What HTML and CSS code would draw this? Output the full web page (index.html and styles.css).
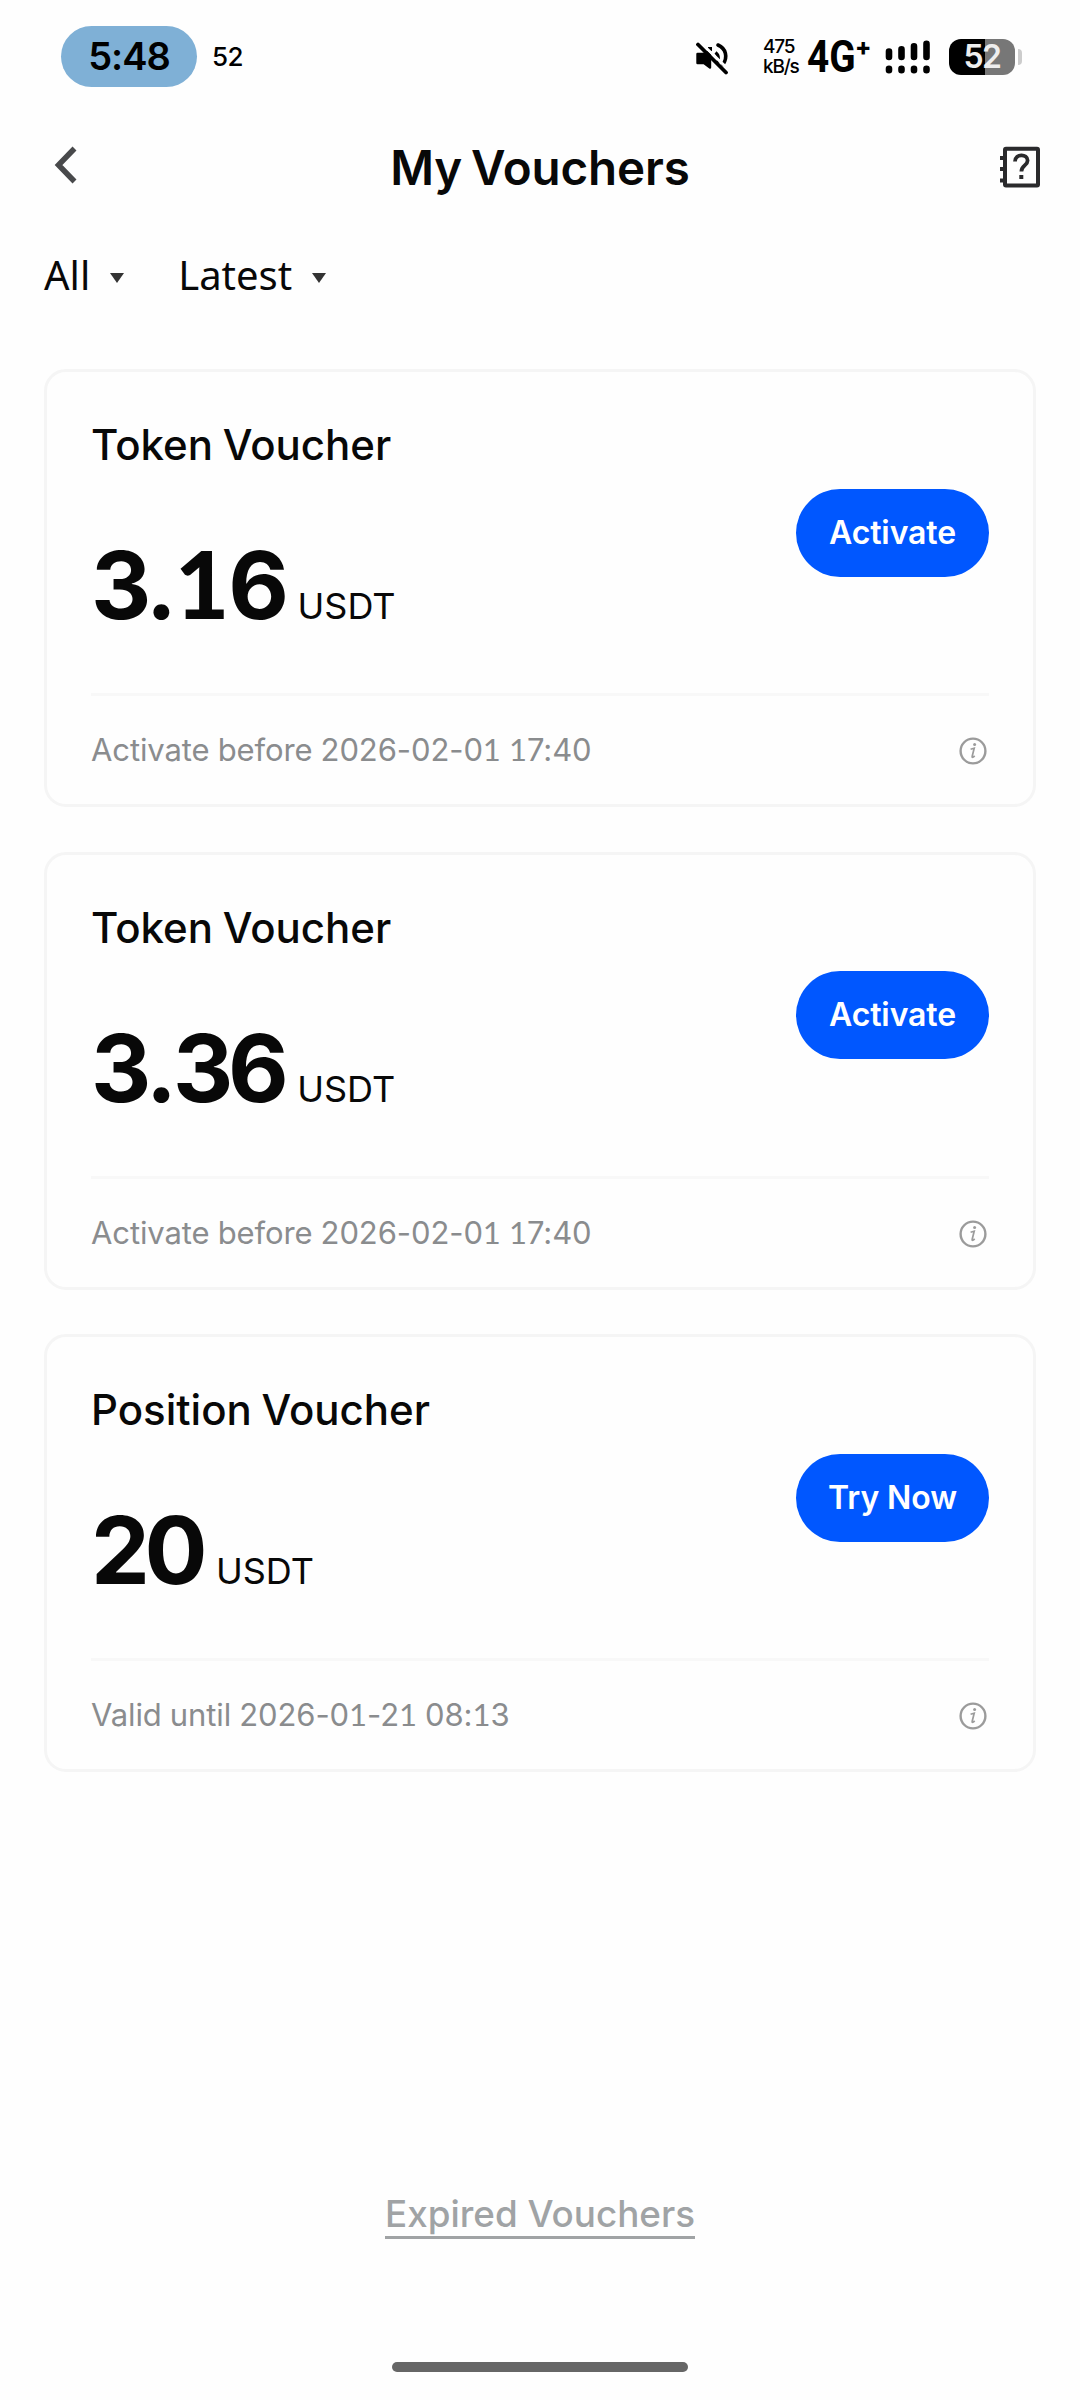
FILE: index.html
```html
<!DOCTYPE html>
<html lang="en">
<head>
<meta charset="utf-8">
<title>My Vouchers</title>
<link rel="stylesheet" href="styles.css">
</head>
<body>
<svg class="defs" width="0" height="0" aria-hidden="true">
  <symbol id="info" viewBox="0 0 28 28">
    <circle cx="14" cy="14" r="12.4" fill="none" stroke="#9b9b9b" stroke-width="2.4"/>
    <circle cx="15.600" cy="7.600" r="1.500" fill="#9b9b9b"/>
    <path d="M11.600 12.300L15.200 11.200L13.200 19.300C12.900 20.800 13.800 20.600 15.700 18.800" fill="none" stroke="#9b9b9b" stroke-width="1.700"/>
  </symbol>
</svg>
<div class="screen">
  <div class="status">
    <span class="clock">5:48</span>
    <span class="temp">52</span>
    <div class="indicators">
      <svg class="mute" width="34" height="36" viewBox="0 0 34 36">
        <path d="M2.500 15h5.500l7-3v16.500l-6-4.500h-6.500z" fill="#000" stroke="#000" stroke-width="2.400" stroke-linejoin="round"/>
        <path d="M15 8v4" stroke="#000" stroke-width="4"/>
        <path d="M20.500 13.500c3 2.500 3.500 6 2.500 10" fill="none" stroke="#000" stroke-width="3.200"/>
        <path d="M23 6c8 3.500 10 12 5 19.500" fill="none" stroke="#000" stroke-width="3.600" stroke-linecap="round"/>
        <path d="M6 4L34.500 31.500" stroke="#fefefe" stroke-width="3"/>
        <path d="M3 5.500L31 33.500" stroke="#000" stroke-width="3.800" stroke-linecap="round"/>
      </svg>
      <div class="speed"><span>475</span><span>kB/s</span></div>
      <span class="net">4G</span><span class="plus">+</span>
      <svg class="signal" width="46" height="36" viewBox="0 0 46 36" stroke="#000" stroke-width="6.600" stroke-linecap="round">
        <path d="M4 12.500v5.500M16.500 10.400v7.600M29 7.400v10.600M41.500 4.900v13.100"/>
        <path d="M4 29.800v1.400M16.500 29.800v1.400M29 29.800v1.400M41.500 29.800v1.400"/>
      </svg>
      <span class="battery">52</span><span class="nub"></span>
    </div>
  </div>

  <header class="header">
    <svg class="back" width="30" height="40" viewBox="0 0 30 40"><path d="M23.500 3.500L7.500 20L23.500 36.500" fill="none" stroke="#48494b" stroke-width="5.500"/></svg>
    <h1 class="title">My Vouchers</h1>
    <svg class="help" width="44" height="44" viewBox="0 0 44 44">
      <rect x="6" y="3.800" width="33" height="36.800" rx="1" fill="none" stroke="#2a2a2c" stroke-width="4"/>
      <path d="M1 13h5M1 24h5M1 35.500h5" stroke="#2a2a2c" stroke-width="4"/>
      <path d="M16 16.500c0-8 12.600-8 12.600-1c0 5-6.200 5-6.200 11" fill="none" stroke="#2a2a2c" stroke-width="3.800"/>
      <rect x="20.300" y="30" width="4" height="4" fill="#2a2a2c"/>
    </svg>
  </header>

  <nav class="filters">
    <span class="filter all">All</span><span class="caret"></span>
    <span class="filter latest">Latest</span><span class="caret"></span>
  </nav>

  <main class="list">
    <article class="card">
      <div class="main">
        <div class="info">
          <h2 class="name">Token Voucher</h2>
          <div class="amount"><span class="value">3<span class="point">.</span><span class="one">1</span>6</span><span class="unit">USDT</span></div>
        </div>
        <button class="action">Activate</button>
      </div>
      <div class="foot"><span class="date">Activate before 2026-02-0<span class="thin-one">1</span> <span class="thin-one">1</span>7:40</span><svg class="tip" width="28" height="28"><use href="#info"/></svg></div>
    </article>
    <article class="card">
      <div class="main">
        <div class="info">
          <h2 class="name">Token Voucher</h2>
          <div class="amount"><span class="value">3<span class="point">.</span>36</span><span class="unit">USDT</span></div>
        </div>
        <button class="action">Activate</button>
      </div>
      <div class="foot"><span class="date">Activate before 2026-02-0<span class="thin-one">1</span> <span class="thin-one">1</span>7:40</span><svg class="tip" width="28" height="28"><use href="#info"/></svg></div>
    </article>
    <article class="card">
      <div class="main">
        <div class="info">
          <h2 class="name">Position Voucher</h2>
          <div class="amount"><span class="value">20</span><span class="unit">USDT</span></div>
        </div>
        <button class="action">Try Now</button>
      </div>
      <div class="foot"><span class="date">Valid until 2026-0<span class="thin-one">1</span>-2<span class="thin-one">1</span> 08:<span class="thin-one">1</span>3</span><svg class="tip" width="28" height="28"><use href="#info"/></svg></div>
    </article>
  </main>

  <footer class="bottom">
    <a class="expired">Expired Vouchers</a>
    <div class="homebar"></div>
  </footer>
</div>
</body>
</html>
```
FILE: styles.css
```css
* { box-sizing: border-box; }
body { margin: 0; background: #fefefe; }
.defs { display: block; }
.screen {
  width: 1080px; height: 2400px; overflow: hidden;
  display: flex; flex-direction: column;
  font-family: Inter, "Liberation Sans", sans-serif;
  color: #080808; white-space: nowrap;
}

.status { height: 113px; padding: 0 58px 0 61px; display: flex; align-items: center; color: #000; }
.clock {
  width: 136px; height: 61px; border-radius: 31px; background: #7fb0d6;
  text-align: center; font-size: 38px; font-weight: 600; line-height: 60px; letter-spacing: -1px;
}
.temp { margin-left: 15px; font-size: 26px; font-weight: 500; line-height: 60px; letter-spacing: -0.5px; }
.indicators { margin-left: auto; height: 36px; display: flex; align-items: center; }
.mute { margin-right: 34px; }
.speed { width: 33px; display: flex; flex-direction: column; font-size: 19px; line-height: 19.500px; font-weight: 500; letter-spacing: -1.200px; }
.net { margin-left: 11px; width: 48px; font: 700 45px/40px "Roboto", sans-serif; transform: scaleX(0.86); transform-origin: left; }
.plus { align-self: flex-start; width: 20px; font-size: 24px; line-height: 16px; font-weight: 800; }
.signal { margin-left: 10px; }
.battery {
  margin-left: 18px; width: 66px; height: 36px; border-radius: 12px;
  background: linear-gradient(to right, #000 36px, #777 36px);
  color: #eee; text-align: center; font-size: 32px; font-weight: 600; line-height: 36px; letter-spacing: -1.500px;
}
.nub { margin-left: 3px; width: 4px; height: 16px; border-radius: 0 4px 4px 0; background: #ccc; }

.header { height: 110px; padding: 0 37px 0 51px; display: flex; align-items: center; justify-content: space-between; }
.back { margin-top: -6px; }
.title { margin: 0; font-size: 47.500px; line-height: 60px; font-weight: 600; letter-spacing: -0.1px; word-spacing: -3px; }
.help { margin-top: -3px; }

.filters { height: 104px; padding-left: 44px; display: flex; align-items: center; font-family: "Noto Sans", sans-serif; font-size: 40px; line-height: 54px; }
.latest { margin-left: 54px; }
.caret { margin: 5px 0 0 20px; border: 7.500px solid transparent; border-top: 10px solid #333; border-bottom: 0; }

.list { margin-top: 42px; padding: 0 44px; display: flex; flex-direction: column; gap: 44.500px; }
.card { height: 438px; padding: 0 44px; border: 3px solid #f5f5f5; border-radius: 22px; }
.main { height: 324px; display: flex; align-items: center; justify-content: space-between; border-bottom: 3px solid #f8f8f8; }
.info { padding-bottom: 20px; display: flex; flex-direction: column; gap: 75px; }
.name { margin: 0; font-size: 42px; line-height: 50px; font-weight: 500; word-spacing: -1.500px; }
.amount { height: 80px; display: flex; align-items: baseline; line-height: 80px; }
.value { font-size: 93.500px; font-weight: 700; letter-spacing: -5.500px; }
.point { letter-spacing: -4px; }
.one { margin-left: 2px; font-family: Lato, sans-serif; font-weight: 900; line-height: 1px; letter-spacing: -1px; }
.unit { margin-left: 14px; font-size: 36px; line-height: 50px; }
.action {
  width: 193px; height: 88px; padding: 0; border: 0; border-radius: 44px;
  background: #0057ff; color: #fff; font: 600 32px/88px Inter, sans-serif; letter-spacing: -0.1px;
}
.foot { height: 108px; display: flex; align-items: center; justify-content: space-between; }
.date { font-size: 31px; line-height: 40px; color: #8a8c8e; letter-spacing: -0.1px; word-spacing: -0.5px; }
.thin-one { font-family: Lato, sans-serif; line-height: 1px; letter-spacing: 0; }
.tip { margin: 2px 2px 0 0; }

.bottom { margin-top: auto; display: flex; flex-direction: column; align-items: center; }
.expired { height: 50px; border-bottom: 3px solid #a0a3a5; color: #a0a3a5; font-size: 36.800px; line-height: 50px; font-weight: 500; }
.homebar { width: 296px; height: 10px; margin: 123px 0 28px; border-radius: 5px; background: #666; }
```
